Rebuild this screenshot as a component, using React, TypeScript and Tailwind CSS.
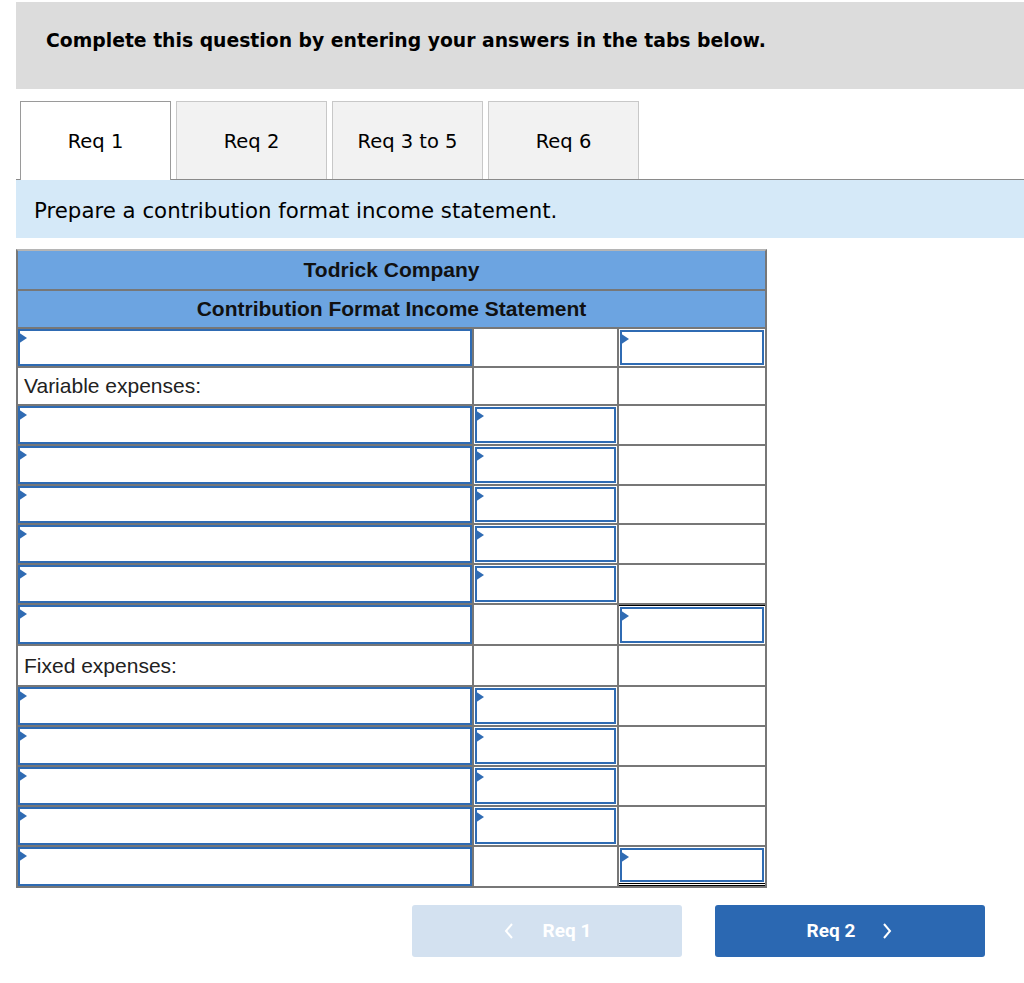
import React from "react";

type Cell = "input" | "plain" | "label";
type Row = { label?: string; cells: [Cell, Cell, Cell]; topLine?: boolean; double?: boolean; h: string };

const rows: Row[] = [
  { cells: ["input", "plain", "input"], h: "h-[39px]" },
  { label: "Variable expenses:", cells: ["label", "plain", "plain"], h: "h-[38px]" },
  { cells: ["input", "input", "plain"], h: "h-[40px]" },
  { cells: ["input", "input", "plain"], h: "h-[40px]" },
  { cells: ["input", "input", "plain"], h: "h-[39px]" },
  { cells: ["input", "input", "plain"], h: "h-[40px]" },
  { cells: ["input", "input", "plain"], h: "h-[40px]" },
  { cells: ["input", "plain", "input"], topLine: true, h: "h-[41px]" },
  { label: "Fixed expenses:", cells: ["label", "plain", "plain"], h: "h-[41px]" },
  { cells: ["input", "input", "plain"], h: "h-[40px]" },
  { cells: ["input", "input", "plain"], h: "h-[40px]" },
  { cells: ["input", "input", "plain"], h: "h-[40px]" },
  { cells: ["input", "input", "plain"], h: "h-[40px]" },
  { cells: ["input", "plain", "input"], double: true, h: "h-[41px]" },
];

function InputBox() {
  return (
    <div className="relative h-full w-full border-2 border-[#2f6bb3] bg-white">
      <div className="absolute left-[-2px] top-[1px] h-0 w-0 border-y-[6px] border-l-[9px] border-y-transparent border-l-[#2f6bb3]" />
    </div>
  );
}

export default function App() {
  return (
    <div className="min-h-[983px] bg-white pt-[2px] text-black" style={{ fontFamily: "'DejaVu Sans', Verdana, sans-serif" }}>
      <div className="ml-[16px] h-[87px] bg-[#dcdcdc] pl-[30px] pt-[25px] text-[18.8px] font-bold">
        Complete this question by entering your answers in the tabs below.
      </div>

      <div className="ml-[20px] mt-[12px] flex gap-[5px]">
        <div className="relative z-10 flex h-[79px] w-[151px] items-center justify-center border-x border-t border-[#9a9a9a] bg-white pt-[2px] text-[19.5px]">
          Req 1
        </div>
        {["Req 2", "Req 3 to 5", "Req 6"].map((t) => (
          <div key={t} className="flex h-[78px] w-[151px] items-center justify-center border-x border-t border-[#c8c8c8] bg-[#f2f2f2] pt-[2px] text-[19.5px]">
            {t}
          </div>
        ))}
      </div>

      <div className="ml-[16px] mt-[-1px] flex h-[59px] items-center border-t border-[#8a8a8a] bg-[#d5e9f8] pl-[18px] pt-[3px] text-[21.3px]">
        Prepare a contribution format income statement.
      </div>

      <div className="ml-[16px] mt-[11px] w-[751px] border-2 border-[#777777] border-t-[#b5b5b5]" style={{ fontFamily: "'Liberation Sans', Arial, sans-serif" }}>
        <div className="flex h-[40px] items-center justify-center border-b-2 border-[#777777] bg-[#6ca4e1] text-[21px] font-bold text-[#111]">
          Todrick Company
        </div>
        <div className="flex h-[36px] items-center justify-center bg-[#6ca4e1] text-[21px] font-bold text-[#111]">
          Contribution Format Income Statement
        </div>
        {rows.map((r, i) => (
          <div key={i} className={`flex ${r.h} border-t-2 border-[#777777]`}>
            <div className="w-[456px] border-r-2 border-[#777777]">
              {r.cells[0] === "input" ? (
                <InputBox />
              ) : (
                <div className="flex h-full items-center pl-[6px] text-[21px] text-[#222]">{r.label}</div>
              )}
            </div>
            <div className="w-[145px] border-r-2 border-[#777777] p-[1px]">
              {r.cells[1] === "input" ? <InputBox /> : <div className="h-full w-full" />}
            </div>
            <div className={`flex-1 ${r.topLine ? "border-t border-black" : ""}`}>
              {r.cells[2] === "input" ? (
                <div className={`h-full ${r.double ? "border-b-[3px] border-double border-black" : ""} p-[1px]`}>
                  <InputBox />
                </div>
              ) : (
                <div className="h-full" />
              )}
            </div>
          </div>
        ))}
      </div>

      <div className="ml-[412px] mt-[17px] flex gap-[33px]" style={{ fontFamily: "Roboto, 'Open Sans', sans-serif" }}>
        <div className="flex h-[52px] w-[270px] items-center justify-center gap-[28px] rounded-[3px] bg-[#d3e1f0] text-[19px] font-bold text-white">
          <svg width="12" height="18" viewBox="0 0 12 18" fill="none" stroke="white" strokeWidth="2">
            <path d="M9 2 L3 9 L9 16" />
          </svg>
          <span>Req 1</span>
        </div>
        <div className="flex h-[52px] w-[270px] items-center justify-center gap-[26px] rounded-[3px] bg-[#2b68b2] text-[19px] font-bold text-white">
          <span>Req 2</span>
          <svg width="12" height="18" viewBox="0 0 12 18" fill="none" stroke="white" strokeWidth="2">
            <path d="M3 2 L9 9 L3 16" />
          </svg>
        </div>
      </div>
    </div>
  );
}
